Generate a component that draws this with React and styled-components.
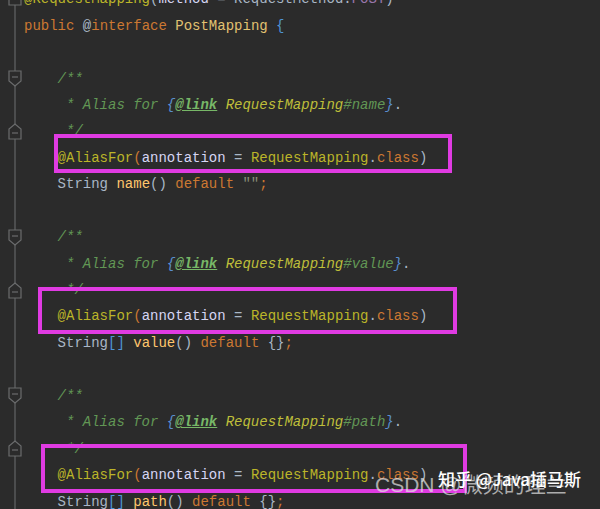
import styled, { createGlobalStyle } from 'styled-components';

const GlobalStyle = createGlobalStyle`
  html, body {
    margin: 0;
    padding: 0;
    background: #2b2b2b;
  }
`;

const Editor = styled.div`
  position: relative;
  width: 600px;
  height: 509px;
  overflow: hidden;
  background: #2b2b2b;
  font-family: "Liberation Mono", "DejaVu Sans Mono", monospace;
  font-size: 14px;
`;

const Lines = styled.div`
  display: flex;
  flex-direction: column;
  margin-top: -13.8px;
`;

const Line = styled.div`
  display: flex;
  align-items: center;
  height: 26.44px;
  flex: none;
`;

const Gutter = styled.div`
  width: 24px;
  height: 100%;
  flex: none;
  display: flex;
  align-items: center;
  padding-left: 8px;
  box-sizing: border-box;
  background: linear-gradient(
    to right,
    transparent 14px,
    #4c4d4e 14px,
    #4c4d4e 16px,
    transparent 16px
  );
`;

const Code = styled.div`
  white-space: pre;
  color: #a9b7c6;
  line-height: 26.44px;
`;

const Kw = styled.span`color: #cc7832;`;
const Ann = styled.span`color: #bbb529;`;
const Cls = styled.span`color: #e2c271;`;
const Fn = styled.span`color: #ffc66d;`;
const Param = styled.span`color: #d6d6f4;`;
const Const = styled.span`color: #9876aa;`;
const Str = styled.span`color: #8a8f7a;`;
const Bracket = styled.span`color: #4f95d6;`;
const Doc = styled.span`
  color: #629755;
  font-style: italic;
`;
const DocTag = styled.span`
  color: #77b767;
  font-style: italic;
  font-weight: bold;
  text-decoration: underline;
`;
const DocRef = styled.span`
  color: #bfbf3a;
  font-style: italic;
`;
const DocBrace = styled.span`
  color: #5a8fd0;
  font-style: italic;
`;

const Highlight = styled.div`
  position: absolute;
  left: ${p => p.$x}px;
  top: ${p => p.$y}px;
  width: ${p => p.$w}px;
  height: ${p => p.$h}px;
  border: 4px solid #e03be2;
  box-sizing: border-box;
  pointer-events: none;
`;

const Watermark = styled.div`
  position: absolute;
  left: 375px;
  top: 474px;
  font-family: "Liberation Sans", "Noto Sans CJK SC", sans-serif;
  font-size: 21px;
  line-height: 21px;
  color: rgba(225, 225, 225, 0.72);
  white-space: nowrap;
`;

const ZhihuMark = styled.div`
  position: absolute;
  left: 438px;
  top: 469px;
  font-family: "Noto Sans CJK SC", "Liberation Sans", sans-serif;
  font-size: 17px;
  line-height: 20px;
  font-weight: 500;
  color: #ffffff;
  white-space: nowrap;
`;

function FoldMarker({ dir }) {
  if (dir === 'box') {
    return (
      <svg width="14" height="17" viewBox="0 0 14 17">
        <path d="M1 1 H13 V14 H1 Z" fill="#2b2b2b" stroke="#6b6c6d" strokeWidth="1.2" />
      </svg>
    );
  }
  const d = dir === 'down'
    ? 'M1 1 H13 V11 L7 16 L1 11 Z'
    : 'M1 16 H13 V6 L7 1 L1 6 Z';
  const y = dir === 'down' ? 7 : 10;
  return (
    <svg width="14" height="17" viewBox="0 0 14 17">
      <path d={d} fill="#2b2b2b" stroke="#6b6c6d" strokeWidth="1.2" />
      <path d={`M4 ${y} H10`} stroke="#6b6c6d" strokeWidth="1.2" />
    </svg>
  );
}

const aliasFor = (
  <>
    {'    '}<Ann>@AliasFor</Ann><Kw>(</Kw><Param>annotation</Param> = <Ann>RequestMapping</Ann>.<Kw>class</Kw>)
  </>
);

const docLine = (name) => (
  <>
    <Doc>{'     * Alias for '}</Doc><DocBrace>{'{'}</DocBrace><DocTag>@link</DocTag><Doc> </Doc><DocRef>RequestMapping</DocRef><Doc>#{name}</Doc><DocBrace>{'}'}</DocBrace>.
  </>
);

const rows = [
  { fold: 'box', code: <><Ann>@RequestMapping</Ann>(<Param>method</Param> = RequestMethod.<Const>POST</Const>)</> },
  { code: <><Kw>public</Kw> @<Kw>interface</Kw> <Cls>PostMapping</Cls> <Bracket>{'{'}</Bracket></> },
  { code: '' },
  { fold: 'down', code: <Doc>{'    /**'}</Doc> },
  { code: docLine('name') },
  { fold: 'up', code: <Doc>{'     */'}</Doc> },
  { code: aliasFor },
  { code: <>{'    String '}<Fn>name</Fn>() <Kw>default</Kw> <Str>""</Str><Kw>;</Kw></> },
  { code: '' },
  { fold: 'down', code: <Doc>{'    /**'}</Doc> },
  { code: docLine('value') },
  { fold: 'up', code: <Doc>{'     */'}</Doc> },
  { code: aliasFor },
  { code: <>{'    String'}<Bracket>[]</Bracket> <Fn>value</Fn>() <Kw>default</Kw> {'{}'}<Kw>;</Kw></> },
  { code: '' },
  { fold: 'down', code: <Doc>{'    /**'}</Doc> },
  { code: docLine('path') },
  { fold: 'up', code: <Doc>{'     */'}</Doc> },
  { code: aliasFor },
  { code: <>{'    String'}<Bracket>[]</Bracket> <Fn>path</Fn>() <Kw>default</Kw> {'{}'}<Kw>;</Kw></> },
  { code: '' },
];

export default function App() {
  return (
    <Editor>
      <GlobalStyle />
      <Lines>
        {rows.map((row, i) => (
          <Line key={i}>
            <Gutter>{row.fold && <FoldMarker dir={row.fold} />}</Gutter>
            <Code>{row.code}</Code>
          </Line>
        ))}
      </Lines>
      <Highlight $x={54} $y={134} $w={398} $h={39} />
      <Highlight $x={38} $y={287} $w={419} $h={47} />
      <Highlight $x={41} $y={444} $w={426} $h={49} />
      <Watermark>CSDN @微频的理兰</Watermark>
      <ZhihuMark>知乎 @Java插马斯</ZhihuMark>
    </Editor>
  );
}
